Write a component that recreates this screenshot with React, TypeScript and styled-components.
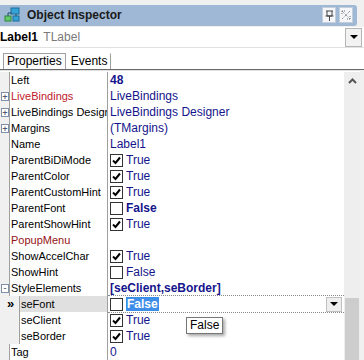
import React from 'react';
import styled, { createGlobalStyle } from 'styled-components';

type Prop = {
  name: string;
  value?: string;
  kind?: 'ref' | 'event';
  bold?: boolean;
  check?: boolean;
  expand?: '+' | '-';
  sub?: boolean;
  selected?: boolean;
};

const props: Prop[] = [
  { name: 'Left', value: '48', bold: true },
  { name: 'LiveBindings', value: 'LiveBindings', kind: 'ref', expand: '+' },
  { name: 'LiveBindings Designer', value: 'LiveBindings Designer', expand: '+' },
  { name: 'Margins', value: '(TMargins)', expand: '+' },
  { name: 'Name', value: 'Label1' },
  { name: 'ParentBiDiMode', value: 'True', check: true },
  { name: 'ParentColor', value: 'True', check: true },
  { name: 'ParentCustomHint', value: 'True', check: true },
  { name: 'ParentFont', value: 'False', check: false, bold: true },
  { name: 'ParentShowHint', value: 'True', check: true },
  { name: 'PopupMenu', kind: 'event' },
  { name: 'ShowAccelChar', value: 'True', check: true },
  { name: 'ShowHint', value: 'False', check: false },
  { name: 'StyleElements', value: '[seClient,seBorder]', bold: true, expand: '-' },
  { name: 'seFont', value: 'False', check: false, sub: true, selected: true },
  { name: 'seClient', value: 'True', check: true, sub: true },
  { name: 'seBorder', value: 'True', check: true, sub: true },
  { name: 'Tag', value: '0' },
];

const App = () => {
  return (
    <>
      <GlobalStyle />
      <Window>
        <TitleBar>
          <TitleIcon viewBox="0 0 18 16">
            <rect x="8" y="1" width="8" height="6" fill="#35a3d8" stroke="#1d6f98" />
            <rect x="2" y="9" width="6" height="5" fill="#64c96b" stroke="#2f8a3a" />
            <rect x="10" y="9" width="6" height="5" fill="#35a3d8" stroke="#1d6f98" />
            <path d="M5 9V6h4M13 7v2" stroke="#1d4f70" fill="none" />
          </TitleIcon>
          <Title>Object Inspector</Title>
          <TitleButton>
            <svg width="9" height="11" viewBox="0 0 9 11">
              <path d="M1 1h7M2 1v5h5V1M0.5 6h8M4.5 6v5" stroke="#444" fill="none" />
            </svg>
          </TitleButton>
          <TitleButton>
            <svg width="10" height="10" viewBox="0 0 10 10">
              <path d="M1 1l8 8M9 1l-8 8M1 1h3M1 1v3M9 9h-3M9 9v-3" stroke="#777" strokeDasharray="1 1" fill="none" />
            </svg>
          </TitleButton>
        </TitleBar>

        <Combo>
          <ComboText>
            <b>Label1</b> <ComboType>TLabel</ComboType>
          </ComboText>
          <DropButton>
            <Arrow />
          </DropButton>
        </Combo>

        <TabStrip>
          <Tab active>Properties</Tab>
          <Tab>Events</Tab>
        </TabStrip>

        <GridArea>
          <Grid>
            {props.map((p) => (
              <Row key={p.name}>
                <Gutter sub={p.sub}>
                  {p.expand && <ExpandBox>{p.expand}</ExpandBox>}
                  {p.selected && <Marker>»</Marker>}
                </Gutter>
                <NameCell sub={p.sub} kind={p.kind} selected={p.selected}>
                  {p.name}
                </NameCell>
                <ValueCell selected={p.selected}>
                  {p.check !== undefined && (
                    <CheckBox>
                      {p.check && (
                        <svg width="11" height="11" viewBox="0 0 11 11">
                          <path d="M2 5.5l2.5 2.5L9 2.5" stroke="#000" strokeWidth="2" fill="none" />
                        </svg>
                      )}
                    </CheckBox>
                  )}
                  {p.value && (
                    <Value bold={p.bold} selected={p.selected}>
                      {p.value}
                    </Value>
                  )}
                  {p.selected && (
                    <EditButton>
                      <Arrow />
                    </EditButton>
                  )}
                  {p.selected && <Tooltip>False</Tooltip>}
                </ValueCell>
              </Row>
            ))}
          </Grid>
          <ScrollBar>
            <ScrollUp>
              <svg width="9" height="6" viewBox="0 0 9 6">
                <path d="M1 5l3.5-3.5L8 5" stroke="#555" strokeWidth="2" fill="none" />
              </svg>
            </ScrollUp>
            <ScrollThumb />
          </ScrollBar>
        </GridArea>
      </Window>
    </>
  );
};

export default App;

const GlobalStyle = createGlobalStyle`
  body {
    margin: 0;
    background: #f0f0f0;
    font-family: "Liberation Sans", Arial, sans-serif;
    font-size: 11px;
  }
`;

const Window = styled.div`
  width: 364px;
  height: 360px;
  overflow: hidden;
  display: flex;
  flex-direction: column;
  background: #f0f0f0;
  padding-top: 5px;
  box-sizing: border-box;
`;

const TitleBar = styled.div`
  width: 357px;
  height: 22px;
  background: #9fb8d5;
  border-radius: 0 3px 3px 0;
  display: flex;
  align-items: center;
  padding: 0 4px 0 3px;
  box-sizing: border-box;
`;

const TitleIcon = styled.svg`
  width: 18px;
  height: 16px;
  margin-right: 6px;
`;

const Title = styled.div`
  flex: 1;
  font-weight: bold;
  font-size: 12px;
  color: #1a1a1a;
`;

const TitleButton = styled.div`
  width: 12px;
  height: 14px;
  margin-left: 3px;
  background: #f4f6f9;
  border: 1px solid #c4cfdc;
  display: flex;
  align-items: center;
  justify-content: center;
`;

const Combo = styled.div`
  height: 21px;
  margin-top: 1px;
  background: #fff;
  border-bottom: 1px solid #e2e2e2;
  display: flex;
  align-items: center;
  padding-right: 2px;
`;

const ComboText = styled.div`
  flex: 1;
  font-size: 12px;
  color: #000;
  white-space: nowrap;
`;

const ComboType = styled.span`
  color: #7a7a7a;
  margin-left: 2px;
`;

const DropButton = styled.div`
  width: 15px;
  height: 17px;
  background: #f2f2f2;
  border: 1px solid #b5b5b5;
  display: flex;
  align-items: center;
  justify-content: center;
`;

const Arrow = styled.div`
  width: 0;
  height: 0;
  border-left: 4px solid transparent;
  border-right: 4px solid transparent;
  border-top: 4px solid #000;
`;

const TabStrip = styled.div`
  height: 23px;
  background: #fff;
  display: flex;
  align-items: flex-end;
  padding-left: 3px;
  border-bottom: 1px solid #6a6a6a;
  box-sizing: border-box;
`;

const Tab = styled.div<{ active?: boolean }>`
  height: 15px;
  line-height: 15px;
  padding: 0 3px 0 3px;
  font-size: 12px;
  color: #000;
  background: ${(p) => (p.active ? '#fbfbfb' : 'transparent')};
  border: 1px solid ${(p) => (p.active ? '#a0a0a0' : 'transparent')};
  border-bottom: none;
  border-right: 1px solid #a0a0a0;
  margin-right: ${(p) => (p.active ? '1px' : '0')};
`;

const GridArea = styled.div`
  flex: 1;
  display: flex;
  background: #fff;
  border-top: 1px solid #e0e0e0;
  padding-top: 1px;
  margin-right: 4px;
`;

const Grid = styled.div`
  width: 344px;
  display: flex;
  flex-direction: column;
`;

const Row = styled.div`
  height: 16px;
  display: flex;
  align-items: stretch;
  flex-shrink: 0;
`;

const Gutter = styled.div<{ sub?: boolean }>`
  width: ${(p) => (p.sub ? '19px' : '9px')};
  flex-shrink: 0;
  background: #f0f0f0;
  border-right: 1px solid #a0a0a0;
  display: flex;
  align-items: center;
  justify-content: flex-start;
`;

const ExpandBox = styled.div`
  width: 7px;
  height: 7px;
  margin-left: 1px;
  border: 1px solid #7f8fa8;
  background: #fff;
  font-size: 9px;
  line-height: 6px;
  text-align: center;
  color: #304060;
  font-family: "DejaVu Sans Mono", monospace;
  overflow: hidden;
`;

const Marker = styled.div`
  margin-left: 7px;
  font-size: 13px;
  font-weight: bold;
  line-height: 14px;
  color: #000;
`;

const NameCell = styled.div<{ sub?: boolean; kind?: 'ref' | 'event'; selected?: boolean }>`
  width: ${(p) => (p.sub ? '86px' : '96px')};
  flex-shrink: 0;
  padding-left: 1px;
  border-right: 1px solid #a0a0a0;
  line-height: 16px;
  white-space: nowrap;
  overflow: hidden;
  text-overflow: clip;
  background: ${(p) => (p.selected ? '#e0e0e0' : 'transparent')};
  color: ${(p) => (p.kind === 'ref' ? '#c0202a' : p.kind === 'event' ? '#951414' : '#000')};
`;

const ValueCell = styled.div<{ selected?: boolean }>`
  flex: 1;
  display: flex;
  align-items: center;
  padding-left: 2px;
  position: relative;
  white-space: nowrap;
  border: 1px dotted ${(p) => (p.selected ? '#8a8a8a' : 'transparent')};
  border-left: none;
  border-right: none;
  margin-top: -1px;
  height: 16px;
`;

const CheckBox = styled.div`
  width: 11px;
  height: 11px;
  border: 1px solid #333;
  background: #fff;
  margin-right: 3px;
  flex-shrink: 0;
  display: flex;
  align-items: center;
  justify-content: center;
`;

const Value = styled.span<{ bold?: boolean; selected?: boolean }>`
  color: ${(p) => (p.selected ? '#fff' : '#14148c')};
  background: ${(p) => (p.selected ? '#3d8ee8' : 'transparent')};
  font-weight: ${(p) => (p.bold || p.selected ? 'bold' : 'normal')};
  font-size: 12px;
  line-height: 14px;
  padding: ${(p) => (p.selected ? '0 1px' : '0')};
`;

const EditButton = styled.div`
  margin-left: auto;
  margin-right: 2px;
  width: 14px;
  height: 13px;
  background: #eeeeee;
  border: 1px solid #c0c0c0;
  display: flex;
  align-items: center;
  justify-content: center;
`;

const Tooltip = styled.div`
  position: absolute;
  left: 78px;
  top: 21px;
  padding: 1px 3px;
  background: #fff;
  border: 1px solid #767676;
  box-shadow: 2px 2px 3px rgba(0, 0, 0, 0.35);
  font-size: 12px;
  line-height: 13px;
  color: #000;
  z-index: 2;
`;

const ScrollBar = styled.div`
  width: 16px;
  background: #eeeeee;
  display: flex;
  flex-direction: column;
  align-items: center;
`;

const ScrollUp = styled.div`
  height: 18px;
  display: flex;
  align-items: center;
  justify-content: center;
`;

const ScrollThumb = styled.div`
  margin-top: auto;
  width: 14px;
  height: 62px;
  background: #cdcdcd;
`;
